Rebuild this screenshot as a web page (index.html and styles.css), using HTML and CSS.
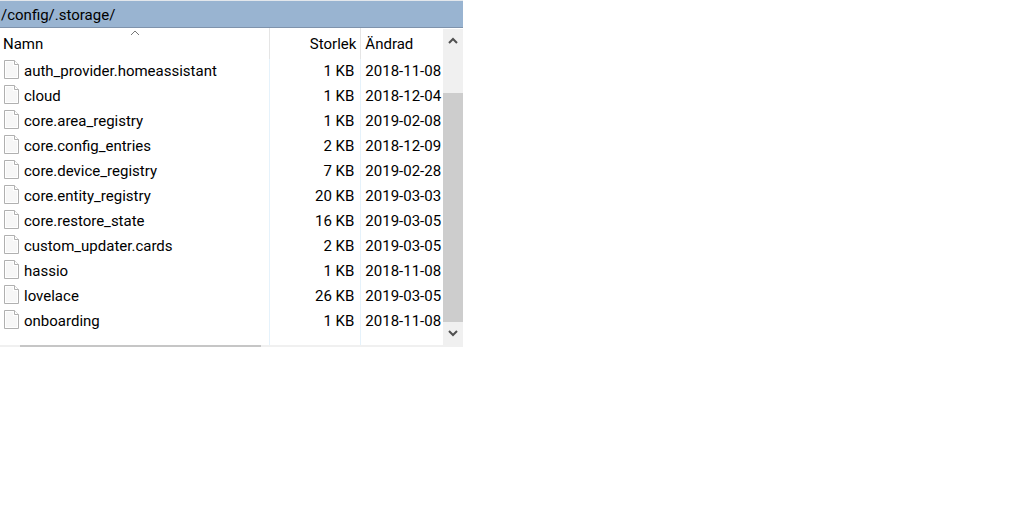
FILE: index.html
```html
<!DOCTYPE html>
<html lang="sv">
<head>
    <meta charset="UTF-8">
    <meta name="viewport" content="width=device-width, initial-scale=1.0">
    <title>/config/.storage/</title>
    <link rel="stylesheet" href="styles.css">
</head>
<body>
    <svg class="sprite" aria-hidden="true">
        <symbol id="file-icon" viewBox="0 0 15 19">
            <path d="M.5.5H10.5L14.5 4.5V18.5H.5Z" fill="#fff" stroke="#b0b0b0"/>
            <path d="M2 2H9V6H13V17H2Z" fill="#f7f7f7"/>
            <path d="M10.5.5V4.5H14.5" fill="#fff" stroke="#b0b0b0"/>
        </symbol>
    </svg>

    <main class="panel">
        <h1 class="path">/config/.storage/</h1>

        <div class="list">
            <table class="files">
                <thead>
                    <tr>
                        <th class="name" aria-sort="ascending">
                            Namn
                            <svg class="sort" width="10" height="6" viewBox="0 0 10 6" aria-hidden="true"><path d="M1 5L5 1L9 5"/></svg>
                        </th>
                        <th class="size">Storlek</th>
                        <th class="date">Ändrad</th>
                    </tr>
                </thead>
                <tbody id="file-rows"></tbody>
            </table>

            <div class="scrollbar">
                <button class="scroll-button" aria-label="Scrolla upp">
                    <svg width="10" height="7" viewBox="0 0 10 7"><path d="M1 6L5 2L9 6"/></svg>
                </button>
                <div class="track">
                    <div class="thumb"></div>
                </div>
                <button class="scroll-button" aria-label="Scrolla ner">
                    <svg width="10" height="7" viewBox="0 0 10 7"><path d="M1 1L5 5L9 1"/></svg>
                </button>
            </div>
        </div>

        <div class="bottom-scrollbar">
            <div class="bottom-thumb"></div>
        </div>
    </main>

    <script src="script.js"></script>
</body>
</html>
```
FILE: styles.css
```css
body {
    margin: 0;
    background-color: #fff;
    color: #000;
    font-family: "Segoe UI", Roboto, "Noto Sans", sans-serif;
    font-size: 15px;
    line-height: 25px;
}

.sprite {
    display: none;
}

.panel {
    width: 45.25%;
    min-width: 400px;
}

.path {
    margin: 0;
    padding-top: 2px;
    padding-left: 1px;
    border-top: 1px solid #e3e7ec;
    border-bottom: 1px solid #7f93ac;
    background-color: #99b4d1;
    font-size: 15px;
    font-weight: normal;
    line-height: 24px;
}

.list {
    display: flex;
}

.files {
    flex: 1;
    min-width: 0;
    table-layout: fixed;
    border-collapse: separate;
    border-spacing: 0;
}

.files th,
.files td {
    padding: 0;
    text-align: left;
    font-weight: normal;
    white-space: nowrap;
}

.files th {
    padding-top: 1px;
    line-height: 30px;
}

.files td {
    height: 25px;
}

.files tbody tr:last-child td {
    padding-bottom: 11px;
}

.files .name {
    position: relative;
    padding-left: 3px;
}

.files td.name {
    padding-left: 4px;
}

.files .size {
    width: 86px;
    padding-right: 4px;
    border-left: 1px solid #e5e5e5;
    text-align: right;
}

.files .date {
    width: 78px;
    padding-left: 4px;
    border-left: 1px solid #e5e5e5;
}

.files td.size,
.files td.date {
    border-color: #e5f2fb;
}

/* values sit a little further in than the heading */
.files td.size {
    width: 84px;
    padding-right: 6px;
}

.sort {
    position: absolute;
    top: 2px;
    left: 50%;
    margin-left: -5px;
    fill: none;
    stroke: #777;
}

.file {
    display: flex;
    align-items: center;
    gap: 5px;
}

.file-icon {
    width: 15px;
    height: 19px;
    margin-bottom: 4px;
}

.scrollbar {
    display: flex;
    flex-direction: column;
    width: 20px;
    margin-top: 1px;
    background-color: #f0f0f0;
}

.scroll-button {
    display: flex;
    align-items: center;
    justify-content: center;
    height: 23px;
    padding: 0;
    border: none;
    background: none;
}

.scroll-button path {
    fill: none;
    stroke: #505050;
    stroke-width: 2;
}

.track {
    display: flex;
    flex: 1;
    flex-direction: column;
    justify-content: flex-end;
}

.thumb {
    height: 85%;
    background-color: #cdcdcd;
}

.bottom-scrollbar {
    padding-left: 20px;
    background-color: #f0f0f0;
}

.bottom-thumb {
    width: 54.4%;
    height: 2px;
    background-color: #c6c6c6;
}
```
FILE: script.js
```javascript
const files = [
    ['auth_provider.homeassistant', '1 KB', '2018-11-08'],
    ['cloud', '1 KB', '2018-12-04'],
    ['core.area_registry', '1 KB', '2019-02-08'],
    ['core.config_entries', '2 KB', '2018-12-09'],
    ['core.device_registry', '7 KB', '2019-02-28'],
    ['core.entity_registry', '20 KB', '2019-03-03'],
    ['core.restore_state', '16 KB', '2019-03-05'],
    ['custom_updater.cards', '2 KB', '2019-03-05'],
    ['hassio', '1 KB', '2018-11-08'],
    ['lovelace', '26 KB', '2019-03-05'],
    ['onboarding', '1 KB', '2018-11-08']
];

document.getElementById('file-rows').innerHTML = files.map(([name, size, date]) => `
    <tr>
        <td class="name">
            <div class="file">
                <svg class="file-icon" aria-hidden="true"><use href="#file-icon"/></svg>
                <span>${name}</span>
            </div>
        </td>
        <td class="size">${size}</td>
        <td class="date">${date}</td>
    </tr>
`).join('');
```
